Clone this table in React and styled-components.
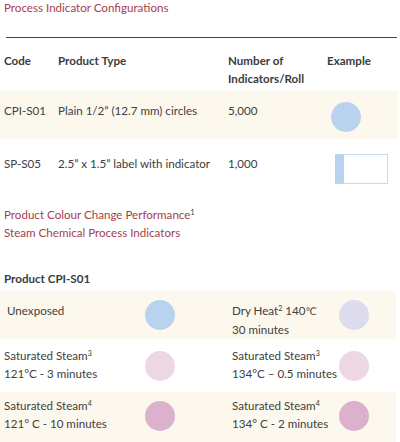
import React from "react";
import styled, { createGlobalStyle } from "styled-components";

const Global = createGlobalStyle`
  html, body { margin: 0; padding: 0; background: #ffffff; }
  body { font-family: Lato, "Open Sans", "Liberation Sans", sans-serif; }
`;

const Page = styled.div`
  width: 400px;
  height: 442px;
  overflow: hidden;
  color: #404040;
  font-size: 11.6px;
  line-height: 18px;
`;

const Title = styled.div`
  color: #a5404f;
  padding: 0 0 0 4px;
  line-height: 16px;
`;

const Rule = styled.div`
  margin: 21px 3px 0 6px;
  height: 1px;
  background: #5b3c43;
`;

const TableGrid = styled.div`
  display: grid;
  grid-template-columns: 54px 170px 99px 1fr;
  padding-left: 4px;
  margin-right: 2px;
  height: ${(p) => p.$h}px;
  padding-top: ${(p) => p.$pt}px;
  box-sizing: border-box;
  align-items: start;
  background: ${(p) => (p.$shade ? "#fdf8ee" : "transparent")};
`;

const HeadCell = styled.div`
  font-weight: 700;
  color: #3c3c3c;
`;

const Cell = styled.div`
  white-space: nowrap;
`;

const ExampleCell = styled.div`
  padding-left: ${(p) => p.$pl}px;
  margin-top: ${(p) => p.$mt}px;
`;

const Dot = styled.div`
  width: 30px;
  height: 30px;
  border-radius: 50%;
  background: ${(p) => p.$c};
  margin-top: ${(p) => p.$mt || 0}px;
`;

const Label = styled.div`
  width: 53px;
  height: 30px;
  box-sizing: border-box;
  border: 1px solid #c6d9ee;
  border-left: 9px solid #b9d3ef;
  background: #fff;
`;

const Heading = styled.div`
  color: #a5404f;
  padding-left: 4px;
  margin-top: ${(p) => p.$mt || 0}px;
`;

const SubHeading = styled.div`
  font-weight: 700;
  color: #3c3c3c;
  padding-left: 4px;
  margin-top: 28px;
  margin-bottom: 3px;
`;

const PerfRow = styled.div`
  display: grid;
  grid-template-columns: 141px 30px 57px 107px 30px;
  align-items: start;
  padding-left: 4px;
  margin-right: 4px;
  height: ${(p) => p.$h}px;
  box-sizing: border-box;
  background: ${(p) => (p.$shade ? "#fdf8ee" : "transparent")};
`;

const PerfText = styled.div`
  padding-top: ${(p) => p.$pt}px;
  padding-left: ${(p) => p.$pl || 0}px;
  white-space: nowrap;
`;

const Sup = styled.sup`
  font-size: 7px;
  line-height: 8px;
  vertical-align: 4px;
  color: #333;
`;

const Celsius = styled.span`
  font-family: "DejaVu Sans", sans-serif;
  font-size: 10px;
`;

const Spacer = styled.div``;

export default function App() {
  return (
    <Page>
      <Global />
      <Title>Process Indicator Configurations</Title>
      <Rule />
      <TableGrid $h={53} $pt={14}>
        <HeadCell>Code</HeadCell>
        <HeadCell>Product Type</HeadCell>
        <HeadCell>
          Number of
          <br />
          Indicators/Roll
        </HeadCell>
        <HeadCell>Example</HeadCell>
      </TableGrid>
      <TableGrid $h={48} $pt={11} $shade>
        <Cell>CPI-S01</Cell>
        <Cell>Plain 1/2” (12.7 mm) circles</Cell>
        <Cell>5,000</Cell>
        <ExampleCell $pl={4} $mt={0}>
          <Dot $c="#b9d3ef" />
        </ExampleCell>
      </TableGrid>
      <TableGrid $h={47} $pt={16}>
        <Cell>SP-S05</Cell>
        <Cell>2.5” x 1.5” label with indicator</Cell>
        <Cell>1,000</Cell>
        <ExampleCell $pl={8} $mt={-1}>
          <Label />
        </ExampleCell>
      </TableGrid>
      <Heading $mt={20}>
        Product Colour Change Performance<Sup>1</Sup>
      </Heading>
      <Heading>Steam Chemical Process Indicators</Heading>
      <SubHeading>Product CPI-S01</SubHeading>
      <PerfRow $h={48} $shade>
        <PerfText $pt={11} $pl={3}>Unexposed</PerfText>
        <Dot $c="#b9d3ef" $mt={9} />
        <Spacer />
        <PerfText $pt={11}>
          Dry Heat<Sup>2</Sup> 140<Celsius>℃</Celsius>
          <br />
          30 minutes
        </PerfText>
        <Dot $c="#dcdcee" $mt={9} />
      </PerfRow>
      <PerfRow $h={53}>
        <PerfText $pt={8}>
          Saturated Steam<Sup>3</Sup>
          <br />
          121°C - 3 minutes
        </PerfText>
        <Dot $c="#ecd7e3" $mt={12} />
        <Spacer />
        <PerfText $pt={8}>
          Saturated Steam<Sup>3</Sup>
          <br />
          134°C – 0.5 minutes
        </PerfText>
        <Dot $c="#ecd7e3" $mt={12} />
      </PerfRow>
      <PerfRow $h={51} $shade>
        <PerfText $pt={5}>
          Saturated Steam<Sup>4</Sup>
          <br />
          121° C - 10 minutes
        </PerfText>
        <Dot $c="#dbb1cd" $mt={9} />
        <Spacer />
        <PerfText $pt={5}>
          Saturated Steam<Sup>4</Sup>
          <br />
          134° C - 2 minutes
        </PerfText>
        <Dot $c="#dbb1cd" $mt={9} />
      </PerfRow>
    </Page>
  );
}
